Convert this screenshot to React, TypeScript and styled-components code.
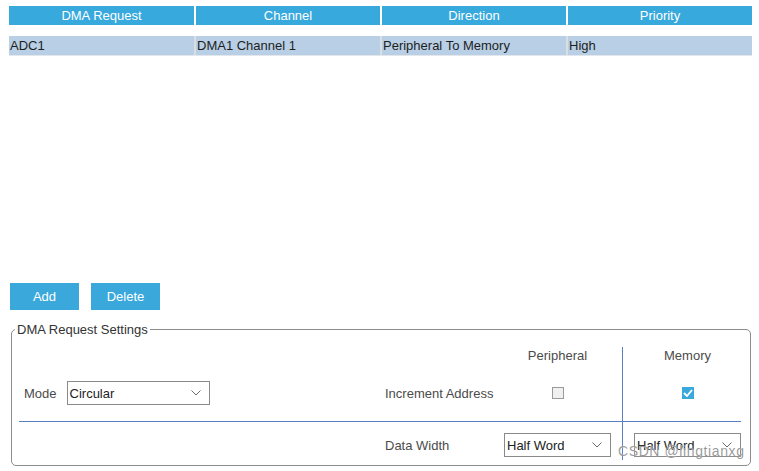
import React, { FC } from "react";
import styled, { createGlobalStyle } from "styled-components";

const GlobalStyle = createGlobalStyle`
  html, body {
    margin: 0;
    padding: 0;
    background: #fff;
  }
  body {
    font-family: "Liberation Sans", Arial, sans-serif;
    font-size: 13px;
  }
`;

const Page = styled.div`
  position: relative;
  box-sizing: border-box;
  width: 759px;
  height: 471px;
  padding-top: 6px;
  overflow: hidden;
`;

const Grid = styled.div`
  display: grid;
  grid-template-columns: 185px 184px 184px 184px;
  column-gap: 2px;
  margin-left: 9px;
  width: 743px;
`;

const HeadRow = styled(Grid)``;

const HeadCell = styled.div`
  height: 19px;
  line-height: 19px;
  background: #38a9dc;
  color: #fff;
  text-align: center;
`;

const DataRow = styled(Grid)`
  margin-top: 11px;
  background: #d9dee4;
  border-bottom: 1px solid #e3e7eb;
`;

const DataCell = styled.div`
  height: 19px;
  line-height: 19px;
  padding-left: 1px;
  background: #b8cfe5;
  color: #1e1e1e;
  white-space: nowrap;
`;

const ButtonBar = styled.div`
  display: flex;
  gap: 12px;
  margin: 227px 0 0 10px;
`;

const Button = styled.button`
  width: 69px;
  height: 27px;
  padding: 0;
  border: none;
  background: #3aa8db;
  color: #fff;
  font: inherit;
`;

const Settings = styled.fieldset`
  box-sizing: border-box;
  width: 740px;
  margin: 12px 0 0 11px;
  padding: 10px 9px 8px 7px;
  border: 1px solid #8c8c8c;
  border-radius: 5px;
`;

const Legend = styled.legend`
  margin-left: -4px;
  padding: 0 2px;
  line-height: 15px;
  color: #333;
`;

// rows: head | gap | increment | gap | divider | gap | data width
const Form = styled.div`
  display: grid;
  grid-template-columns: 366px 119px 107px 23px 107px;
  grid-template-rows: 18px 16px 24px 16px 1px 11px 24px;
  align-items: center;
  color: #4b4b4b;
`;

const ColHead = styled.div<{ col: number }>`
  grid-column: ${(p) => p.col};
  grid-row: 1;
  text-align: center;
  line-height: 18px;
`;

const Cell = styled.div<{ col: number; row: number }>`
  grid-column: ${(p) => p.col};
  grid-row: ${(p) => p.row};
  display: flex;
  align-items: center;
  justify-content: ${(p) => (p.col === 3 || p.col === 5 ? "center" : "flex-start")};
  height: 24px;
`;

const ModeLabel = styled.span`
  margin: 0 10px 0 5px;
`;

const Divider = styled.div`
  grid-column: 1 / -1;
  grid-row: 5;
  height: 1px;
  background: #5b7fc3;
`;

const VLine = styled.div`
  grid-column: 4;
  grid-row: 1 / -1;
  align-self: stretch;
  justify-self: center;
  width: 1px;
  margin-bottom: -3px;
  background: #5b7fc3;
`;

const Select = styled.div<{ w: number }>`
  box-sizing: border-box;
  display: flex;
  align-items: center;
  justify-content: space-between;
  width: ${(p) => p.w}px;
  height: 24px;
  padding: 0 8px 0 2px;
  border: 1px solid #8a8a8a;
  background: #fff;
  color: #222;
`;

const Check = styled.span<{ on?: boolean }>`
  box-sizing: border-box;
  display: inline-flex;
  align-items: center;
  justify-content: center;
  width: 12px;
  height: 12px;
  border: 1px solid ${(p) => (p.on ? "#3aa8db" : "#9a9a9a")};
  background: ${(p) => (p.on ? "#3aa8db" : "#f0f0f0")};
`;

const Watermark = styled.div`
  position: absolute;
  left: 618px;
  top: 443px;
  font-size: 14px;
  letter-spacing: 0.6px;
  color: rgba(120, 120, 120, 0.75);
  text-shadow: 0 0 1px #fff;
  pointer-events: none;
`;

const Chevron: FC = () => (
  <svg width="10" height="6" viewBox="0 0 10 6">
    <polyline points="0.5,0.5 5,5 9.5,0.5" fill="none" stroke="#6a6a6a" strokeWidth="1" />
  </svg>
);

const Dropdown: FC<{ value: string; w: number }> = ({ value, w }) => (
  <Select w={w}>
    <span>{value}</span>
    <Chevron />
  </Select>
);

const CheckMark: FC = () => (
  <svg width="10" height="8" viewBox="0 0 10 8">
    <polyline points="1,4 4,7 9,1" fill="none" stroke="#fff" strokeWidth="1.8" />
  </svg>
);

const columns = ["DMA Request", "Channel", "Direction", "Priority"];
const row = ["ADC1", "DMA1 Channel 1", "Peripheral To Memory", "High"];

const App: FC = () => {
  return (
    <>
      <GlobalStyle />
      <Page>
        <HeadRow>
          {columns.map((c) => (
            <HeadCell key={c}>{c}</HeadCell>
          ))}
        </HeadRow>
        <DataRow>
          {row.map((c) => (
            <DataCell key={c}>{c}</DataCell>
          ))}
        </DataRow>

        <ButtonBar>
          <Button>Add</Button>
          <Button>Delete</Button>
        </ButtonBar>

        <Settings>
          <Legend>DMA Request Settings</Legend>
          <Form>
            <ColHead col={3}>Peripheral</ColHead>
            <ColHead col={5}>Memory</ColHead>
            <VLine />

            <Cell col={1} row={3}>
              <ModeLabel>Mode</ModeLabel>
              <Dropdown value="Circular" w={143} />
            </Cell>
            <Cell col={2} row={3}>Increment Address</Cell>
            <Cell col={3} row={3}>
              <Check />
            </Cell>
            <Cell col={5} row={3}>
              <Check on>
                <CheckMark />
              </Check>
            </Cell>

            <Divider />

            <Cell col={2} row={7}>Data Width</Cell>
            <Cell col={3} row={7}>
              <Dropdown value="Half Word" w={107} />
            </Cell>
            <Cell col={5} row={7}>
              <Dropdown value="Half Word" w={107} />
            </Cell>
          </Form>
        </Settings>
        <Watermark>CSDN @lingtianxg</Watermark>
      </Page>
    </>
  );
};

export default App;
